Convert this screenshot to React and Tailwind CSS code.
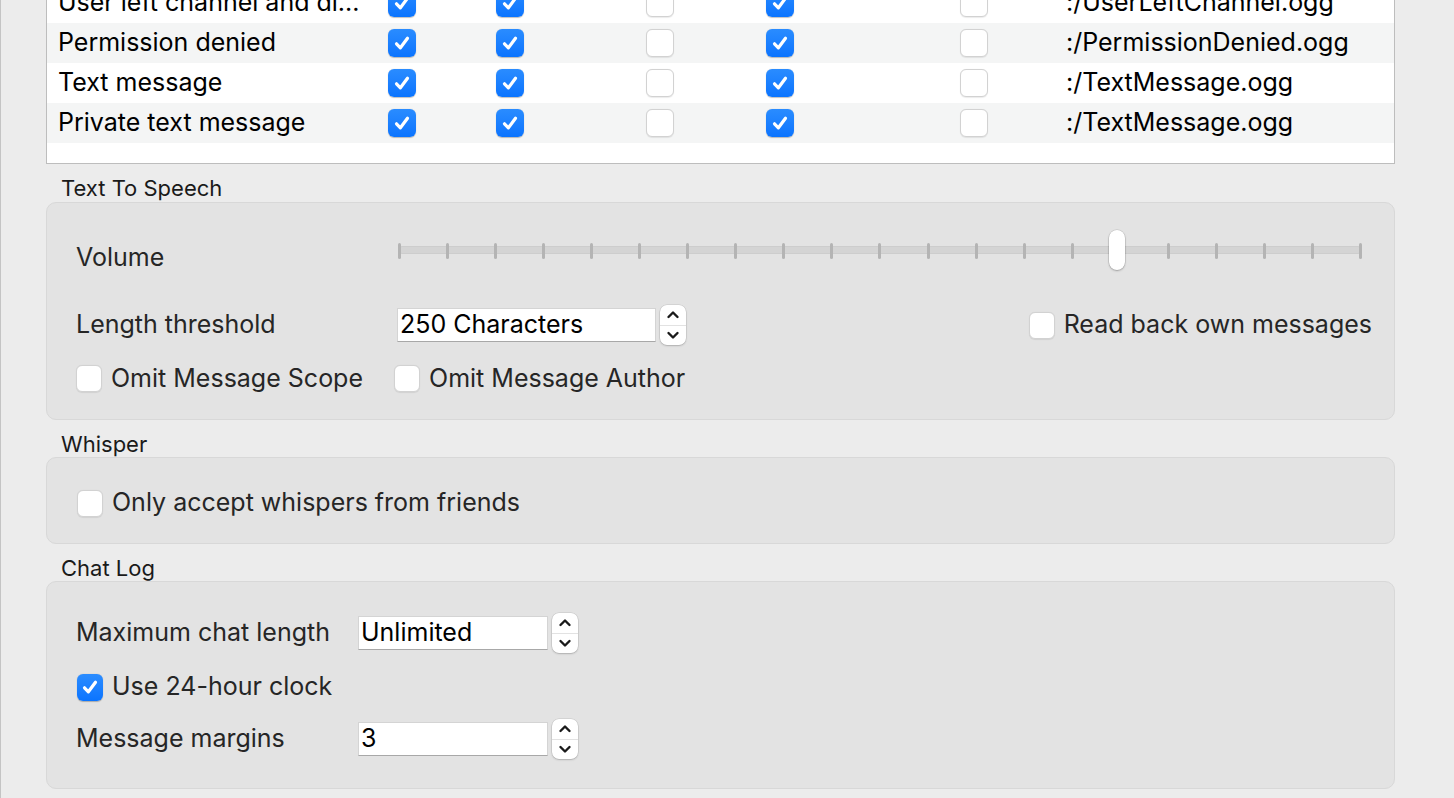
import React from 'react';

const rows = [
  { name: 'User left channel and di...', checks: [true, true, false, true, false], file: ':/UserLeftChannel.ogg' },
  { name: 'Permission denied', checks: [true, true, false, true, false], file: ':/PermissionDenied.ogg' },
  { name: 'Text message', checks: [true, true, false, true, false], file: ':/TextMessage.ogg' },
  { name: 'Private text message', checks: [true, true, false, true, false], file: ':/TextMessage.ogg' },
];

function Checkbox({ checked, big }) {
  const size = big ? 'w-[28px] h-[28px]' : 'w-[26px] h-[27px]';
  if (checked) {
    return (
      <div className={`${size} shrink-0 rounded-[6px] bg-gradient-to-b from-[#2a8cff] to-[#0a74ff] shadow-[0_0.5px_1px_rgba(0,0,0,0.25)] flex items-center justify-center`}>
        <svg width="22" height="22" viewBox="0 0 22 22">
          <path d="M5.5 11.8 L9.4 15.8 L16.5 6.2" fill="none" stroke="white" strokeWidth="3.2" strokeLinecap="round" strokeLinejoin="round" />
        </svg>
      </div>
    );
  }
  return (
    <div className={`${size} shrink-0 rounded-[6px] bg-white border border-[#d2d2d2] shadow-[0_0.5px_1px_rgba(0,0,0,0.08)]`} />
  );
}

function Stepper() {
  return (
    <div className="w-[26px] h-[40px] shrink-0 rounded-[7px] bg-white shadow-[0_0_0_0.5px_rgba(0,0,0,0.12),0_1px_2px_rgba(0,0,0,0.18)] flex flex-col">
      <div className="flex-1 flex items-center justify-center border-b border-[#e2e2e2]">
        <svg width="14" height="9" viewBox="0 0 14 9">
          <path d="M2.5 7 L7 2.5 L11.5 7" fill="none" stroke="#1a1a1a" strokeWidth="2.4" strokeLinecap="round" strokeLinejoin="round" />
        </svg>
      </div>
      <div className="flex-1 flex items-center justify-center">
        <svg width="14" height="9" viewBox="0 0 14 9">
          <path d="M2.5 2 L7 6.5 L11.5 2" fill="none" stroke="#1a1a1a" strokeWidth="2.4" strokeLinecap="round" strokeLinejoin="round" />
        </svg>
      </div>
    </div>
  );
}

function SpinBox({ value, width }) {
  return (
    <div className="flex items-center gap-[4px]">
      <div className={`${width} h-[34px] bg-white border border-[#d4d4d4] border-b-[#a8a8a8] pl-[2px] flex items-center text-black`}>
        {value}
      </div>
      <Stepper />
    </div>
  );
}

function Slider() {
  return (
    <div className="relative w-[964px] h-[40px]">
      <div className="absolute left-0 right-0 top-[16px] h-[8px] rounded-full bg-[#d4d4d4] border border-[#cdcdcd]" />
      <div className="absolute left-0 right-0 top-[13px] h-[16px] flex justify-between">
        {Array.from({ length: 21 }).map((_, i) => (
          <div key={i} className="w-[3px] h-[16px] rounded-full bg-[#b4b4b4]" />
        ))}
      </div>
      <div className="absolute left-[711px] top-0 w-[16px] h-[40px] rounded-full bg-white shadow-[0_0_0_0.5px_rgba(0,0,0,0.15),0_1px_2px_rgba(0,0,0,0.25)]" />
    </div>
  );
}

function GroupTitle({ children, first }) {
  return (
    <div className={`${first ? 'h-[38px]' : 'h-[37px]'} pt-[11px] pl-[15px] text-[22px] leading-[26px] text-[#1a1a1a]`}>
      {children}
    </div>
  );
}

export default function App() {
  return (
    <div className="w-[1454px] h-[798px] overflow-hidden bg-[#ececec] border-l border-[#c4c4c4] font-['Inter',sans-serif] text-[25px]">
      <div className="pl-[45px] pr-[59px]">
        {/* table */}
        <div className="-mt-[18px] bg-white border border-[#bdbdbd]">
          {rows.map((r, i) => (
            <div
              key={i}
              className={`h-[40px] grid grid-cols-[341px_108px_150px_120px_194px_106px_1fr] items-center text-black ${i % 2 === 1 ? 'bg-[#f4f5f5]' : 'bg-white'}`}
            >
              <div className="pl-[11px] whitespace-nowrap overflow-hidden">{r.name}</div>
              {r.checks.map((c, j) => (
                <div key={j}>
                  <Checkbox checked={c} big />
                </div>
              ))}
              <div className="whitespace-nowrap">{r.file}</div>
            </div>
          ))}
          <div className="h-[20px]" />
        </div>

        {/* Text To Speech */}
        <GroupTitle first>Text To Speech</GroupTitle>
        <div className="rounded-[10px] bg-[#e3e3e3] border border-[#d8d8d8] pl-[29px] pr-[22px] pt-[27px] pb-[27px] text-[#262626]">
          <div className="flex h-[40px]">
            <div className="w-[322px] mt-[12px] leading-[30px]">Volume</div>
            <Slider />
          </div>
          <div className="flex items-center h-[40px] mt-[35px]">
            <div className="w-[321px]">Length threshold</div>
            <SpinBox value="250 Characters" width="w-[259px]" />
            <div className="ml-auto flex items-center gap-[9px]">
              <Checkbox />
              <span>Read back own messages</span>
            </div>
          </div>
          <div className="flex items-center h-[27px] mt-[20px]">
            <div className="flex items-center gap-[9px]">
              <Checkbox />
              <span>Omit Message Scope</span>
            </div>
            <div className="flex items-center gap-[9px] ml-[31px]">
              <Checkbox />
              <span>Omit Message Author</span>
            </div>
          </div>
        </div>

        {/* Whisper */}
        <GroupTitle>Whisper</GroupTitle>
        <div className="rounded-[10px] bg-[#e3e3e3] border border-[#d8d8d8] pl-[30px] pt-[31px] pb-[26px] text-[#262626]">
          <div className="flex items-center h-[28px] gap-[9px]">
            <Checkbox />
            <span>Only accept whispers from friends</span>
          </div>
        </div>

        {/* Chat Log */}
        <GroupTitle>Chat Log</GroupTitle>
        <div className="rounded-[10px] bg-[#e3e3e3] border border-[#d8d8d8] pl-[29px] pt-[31px] pb-[29px] text-[#262626]">
          <div className="flex items-center h-[40px]">
            <div className="w-[282px]">Maximum chat length</div>
            <SpinBox value="Unlimited" width="w-[190px]" />
          </div>
          <div className="flex items-center h-[28px] mt-[20px] gap-[9px] pl-[1px]">
            <Checkbox checked />
            <span>Use 24-hour clock</span>
          </div>
          <div className="flex items-center h-[40px] mt-[18px]">
            <div className="w-[282px]">Message margins</div>
            <SpinBox value="3" width="w-[190px]" />
          </div>
        </div>
      </div>
    </div>
  );
}
